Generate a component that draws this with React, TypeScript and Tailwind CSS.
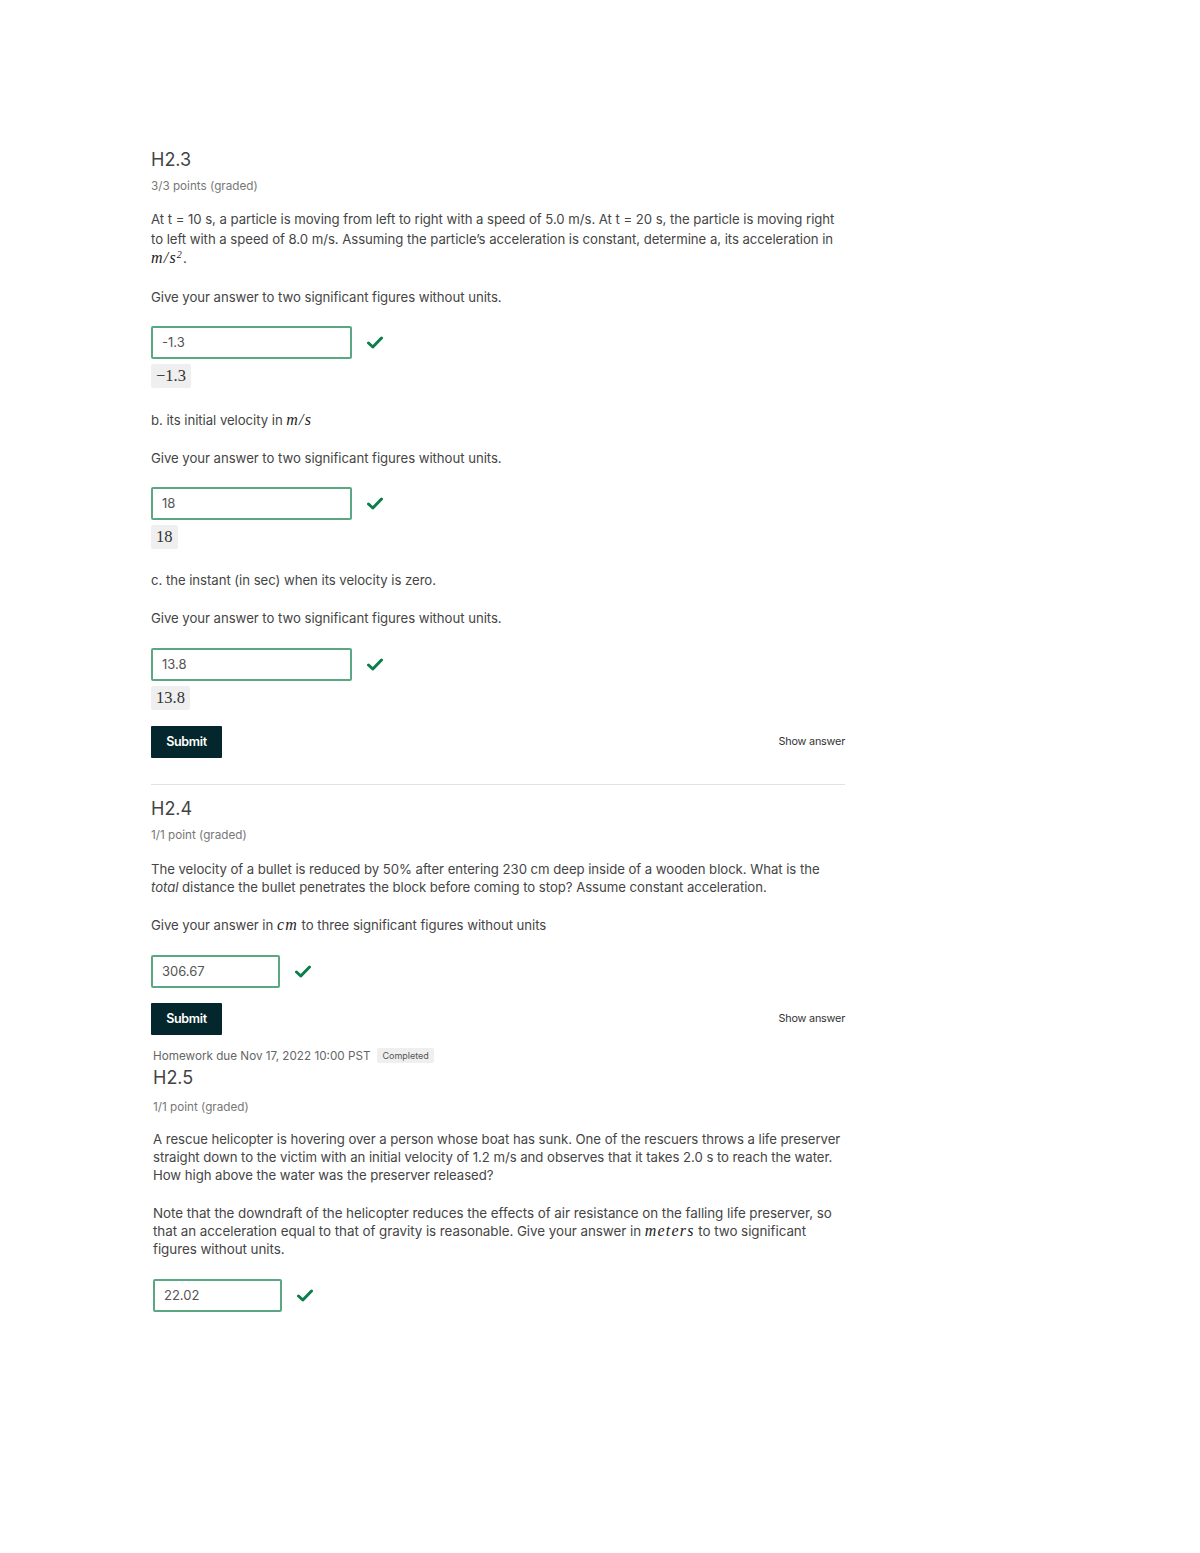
import React from "react";

const Check = () => (
  <svg width="16" height="13" viewBox="0 0 16 13" className="shrink-0">
    <path d="M1.5 7 L5.8 11 L14.5 2" fill="none" stroke="#0d7d4d" strokeWidth="3" strokeLinecap="round" strokeLinejoin="round" />
  </svg>
);

const M = ({ children }: { children: React.ReactNode }) => (
  <span className="italic text-[#222] text-[16px] leading-[16px] tracking-[1.2px]" style={{ fontFamily: '"Liberation Serif", "DejaVu Serif", serif' }}>
    {children}
  </span>
);

const Input = ({ value, w }: { value: string; w: string }) => (
  <div className="flex items-center">
    <div className={`${w} h-[33px] border-2 border-[#5aa882] rounded-[2px] flex items-center pl-[9px] text-[13px] text-[#555] bg-white`}>
      {value}
    </div>
    <div className="ml-[15px]">
      <Check />
    </div>
  </div>
);

const MathBox = ({ children }: { children: React.ReactNode }) => (
  <div className="mt-[5px] inline-flex h-[24px] items-center px-[5px] bg-[#efefef] rounded-[2px] text-[16.5px] text-[#333]" style={{ fontFamily: '"Liberation Serif", "DejaVu Serif", serif' }}>
    {children}
  </div>
);

const SubmitRow = () => (
  <div className="flex items-center justify-between">
    <div className="w-[71px] h-[32px] bg-[#03272c] text-white text-[12.5px] font-semibold flex items-center justify-center rounded-[1px] tracking-[-0.3px]">
      Submit
    </div>
    <div className="text-[10.8px] text-[#333] tracking-[-0.2px]">Show answer</div>
  </div>
);

const P = "text-[13.2px] tracking-[-0.05px]";

export default function App() {
  return (
    <div className="w-[1200px] h-[1553px] bg-white text-[#454545]" style={{ fontFamily: 'Inter, "Noto Sans", sans-serif' }}>
      <div className="ml-[151px] w-[694px] pt-[148px]">
        {/* H2.3 */}
        <div className="text-[18px] leading-[24px] text-[#444]">H2.3</div>
        <div className="mt-[7px] text-[11.7px] leading-[14px] text-[#777]">3/3 points (graded)</div>
        <div className={`mt-[17px] leading-[19.5px] ${P}`}>
          At t = 10 s, a particle is moving from left to right with a speed of 5.0 m/s. At t = 20 s, the particle is moving right to left with a speed of 8.0 m/s. Assuming the particle’s acceleration is constant, determine a, its acceleration in{" "}
          <span className="block leading-[19px]">
            <M>m/s<sup className="text-[10px]">2</sup></M>.
          </span>
        </div>
        <div className={`mt-[20px] leading-[19px] ${P}`}>Give your answer to two significant figures without units.</div>
        <div className="mt-[19px]">
          <Input value="-1.3" w="w-[201px]" />
          <MathBox>−1.3</MathBox>
        </div>
        <div className={`mt-[23px] leading-[19px] ${P}`}>
          b. its initial velocity in <M>m/s</M>
        </div>
        <div className={`mt-[19px] leading-[19px] ${P}`}>Give your answer to two significant figures without units.</div>
        <div className="mt-[19px]">
          <Input value="18" w="w-[201px]" />
          <MathBox>18</MathBox>
        </div>
        <div className={`mt-[22px] leading-[19px] ${P}`}>c. the instant (in sec) when its velocity is zero.</div>
        <div className={`mt-[19px] leading-[19px] ${P}`}>Give your answer to two significant figures without units.</div>
        <div className="mt-[20px]">
          <Input value="13.8" w="w-[201px]" />
          <MathBox>13.8</MathBox>
        </div>
        <div className="mt-[16px]">
          <SubmitRow />
        </div>
        <div className="mt-[26px] border-t border-[#e2e2e2]" />

        {/* H2.4 */}
        <div className="mt-[12px] text-[18px] leading-[24px] text-[#444]">H2.4</div>
        <div className="mt-[7px] text-[11.7px] leading-[14px] text-[#777]">1/1 point (graded)</div>
        <div className={`mt-[18px] leading-[18px] ${P}`}>
          The velocity of a bullet is reduced by 50% after entering 230 cm deep inside of a wooden block. What is the <i>total</i> distance the bullet penetrates the block before coming to stop? Assume constant acceleration.
        </div>
        <div className={`mt-[20px] leading-[19px] ${P}`}>
          Give your answer in <M>cm</M> to three significant figures without units
        </div>
        <div className="mt-[20px]">
          <Input value="306.67" w="w-[129px]" />
        </div>
        <div className="mt-[15px]">
          <SubmitRow />
        </div>

        {/* H2.5 */}
        <div className="ml-[2px]">
          <div className="mt-[13px] flex items-center text-[11.7px] leading-[14px] text-[#666]">
            <span>Homework due Nov 17, 2022 10:00 PST</span>
            <span className="ml-[7px] px-[5px] h-[15px] flex items-center bg-[#efefef] text-[9px] text-[#555] rounded-[2px]">Completed</span>
          </div>
          <div className="mt-[3px] text-[18px] leading-[24px] text-[#444]">H2.5</div>
          <div className="mt-[10px] text-[11.7px] leading-[14px] text-[#777]">1/1 point (graded)</div>
          <div className={`mt-[16px] leading-[18px] ${P}`}>
            A rescue helicopter is hovering over a person whose boat has sunk. One of the rescuers throws a life preserver straight down to the victim with an initial velocity of 1.2 m/s and observes that it takes 2.0 s to reach the water. How high above the water was the preserver released?
          </div>
          <div className="mt-[20px] leading-[18px] text-[13.4px] tracking-[-0.05px]">
            Note that the downdraft of the helicopter reduces the effects of air resistance on the falling life preserver, so that an acceleration equal to that of gravity is reasonable. Give your answer in <M>meters</M> to two significant figures without units.
          </div>
          <div className="mt-[21px]">
            <Input value="22.02" w="w-[129px]" />
          </div>
        </div>
      </div>
    </div>
  );
}
